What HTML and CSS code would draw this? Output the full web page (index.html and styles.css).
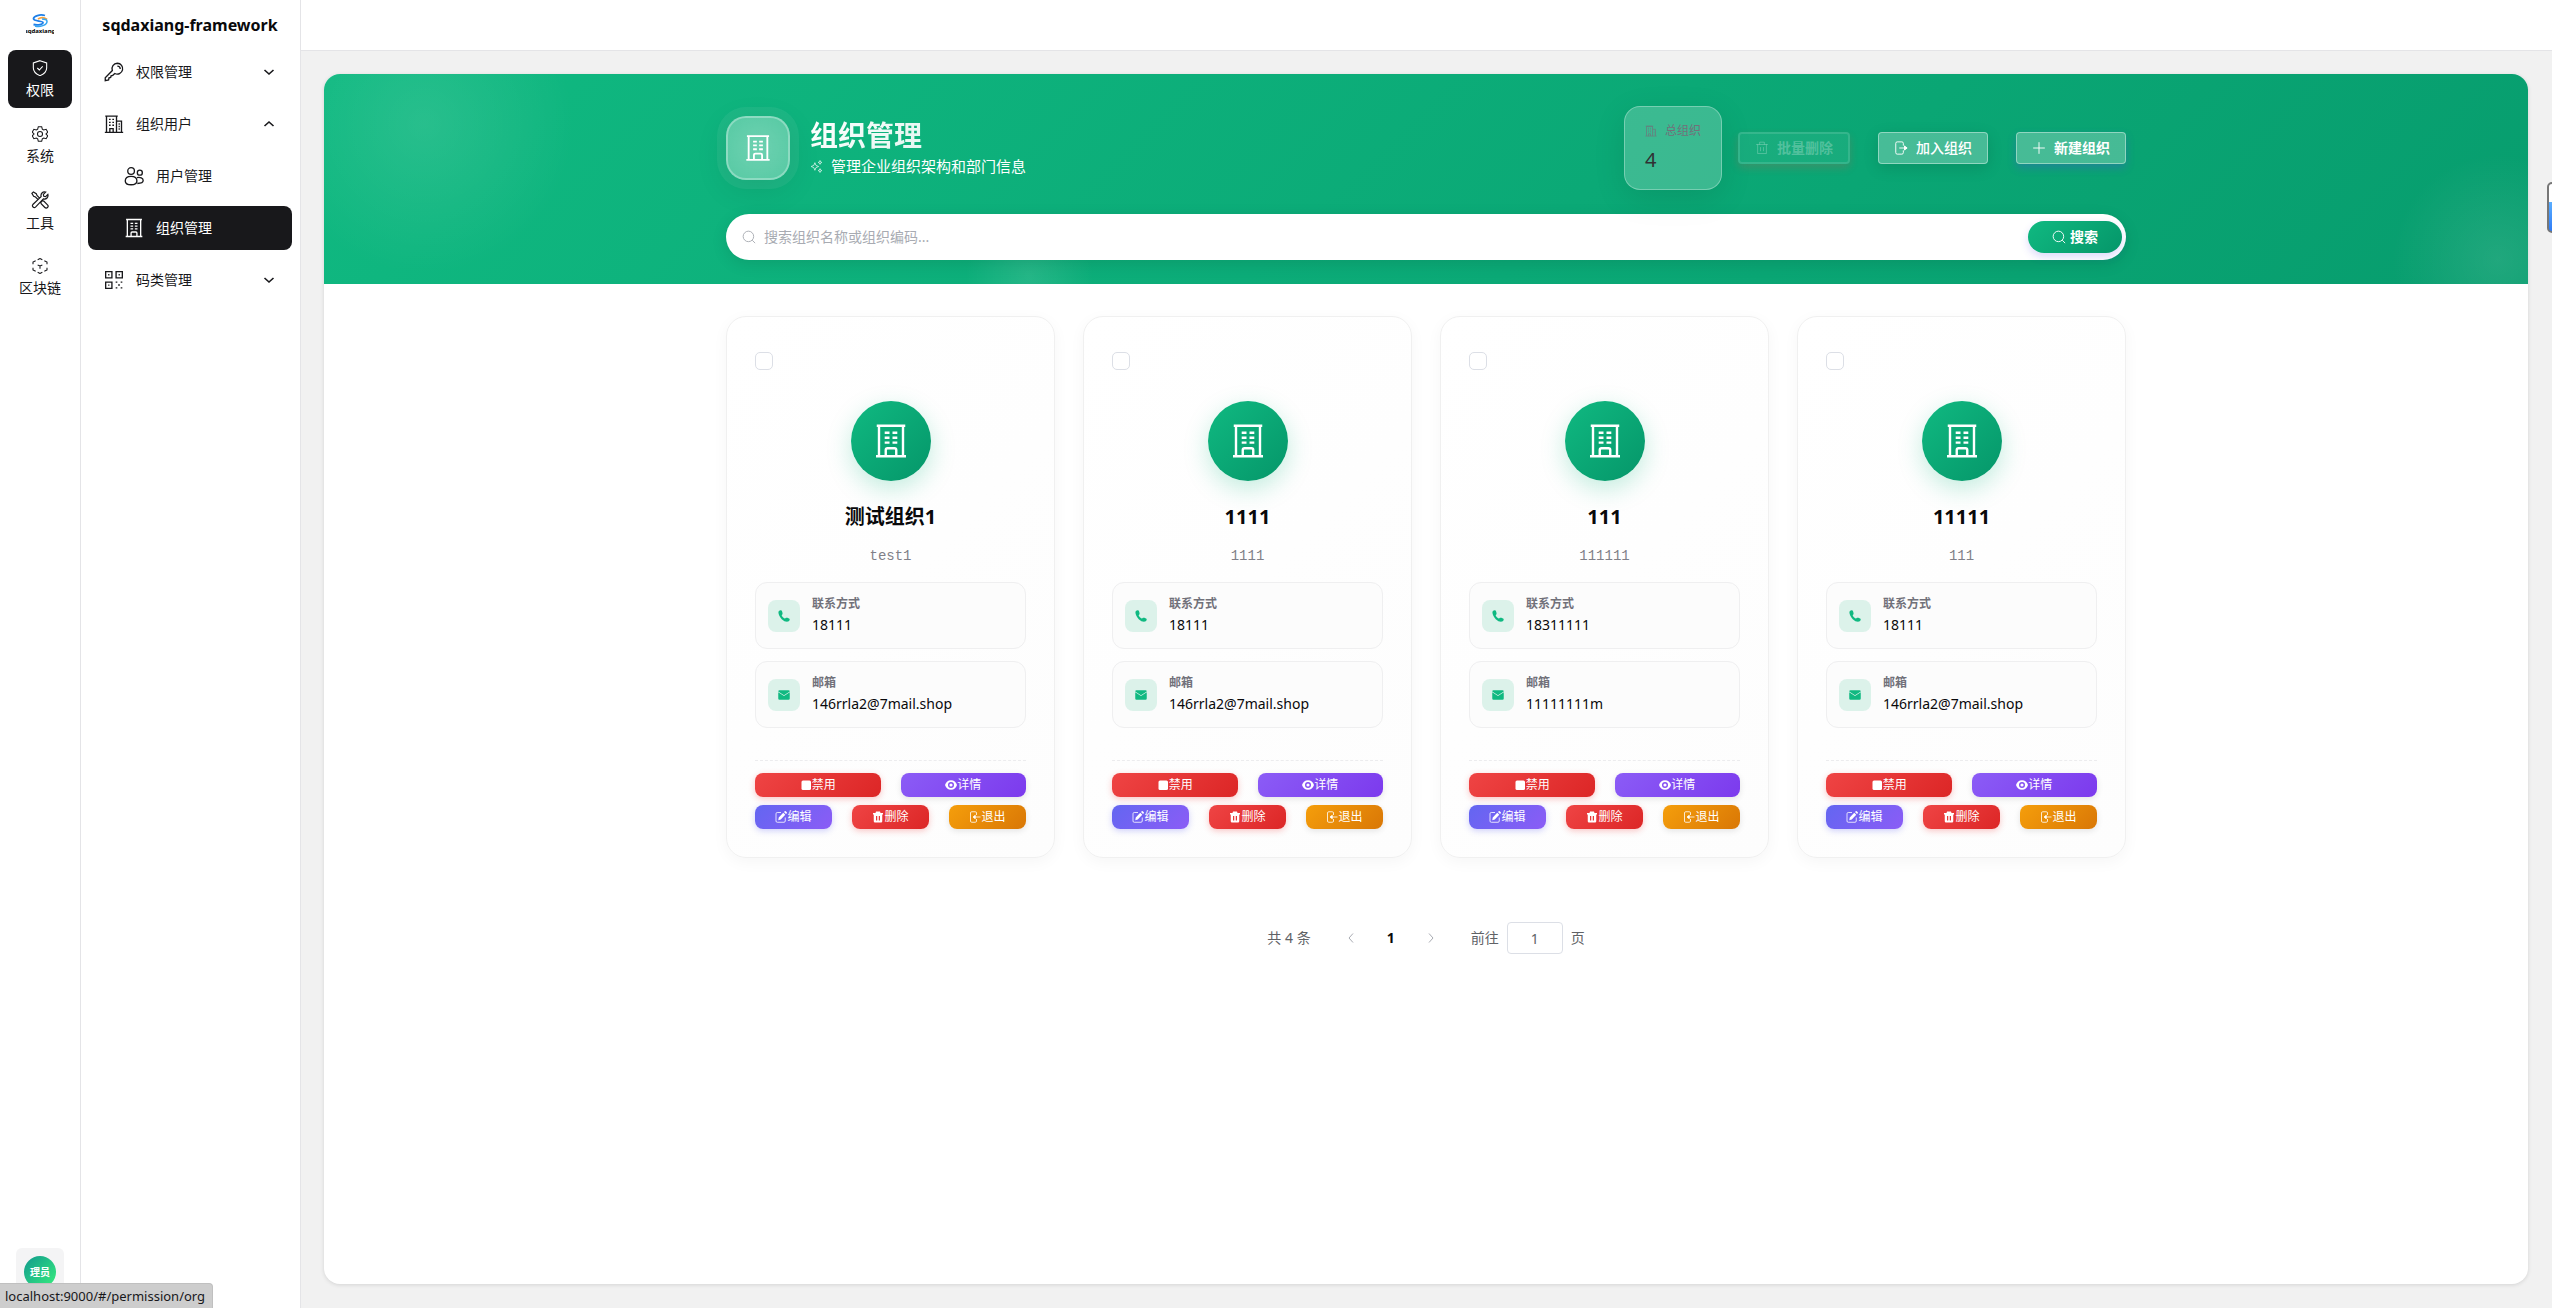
FILE: index.html
```html
<!DOCTYPE html>
<html lang="zh-CN">

<head>
  <meta charset="UTF-8">
  <meta name="viewport" content="width=device-width, initial-scale=1.0">
  <title>组织管理</title>
  <link rel="stylesheet" href="styles.css">
</head>

<body>
  <!-- shared icons -->
  <svg class="icon-defs" width="0" height="0">
    <symbol id="i-building" viewBox="0 0 24 24">
      <path d="M2.500 1.800h19M2 22.200h20M4 1.800v20.400M20 1.800v20.400M8.500 22v-4a1.200 1.200 0 0 1 1.200-1.200h4.600a1.200 1.200 0 0 1 1.200 1.200v4M7.800 6.500h3.200M13 6.500h3.200M7.800 9.800h3.200M13 9.800h3.200M7.800 13.100h3.200M13 13.100h3.200" />
    </symbol>
    <symbol id="i-office" viewBox="0 0 24 24">
      <path d="M1 22h22M3 22V2.500h12V22M15 8.500h6V22M1.500 2.500h15M6 6.500h2M10 6.500h2M6 10h2M10 10h2M6 13.500h2M10 13.500h2M7 22v-4.500h4V22M17.500 12h1.500M17.500 15h1.500M17.500 18h1.500" />
    </symbol>
    <symbol id="i-search" viewBox="0 0 24 24">
      <circle cx="11" cy="11" r="9" />
      <path d="M17.500 17.500l5 5" />
    </symbol>
    <symbol id="i-down" viewBox="0 0 12 12">
      <path d="M1.500 4L6 8l4.500-4" />
    </symbol>
    <symbol id="i-trash" viewBox="0 0 24 24">
      <path d="M2 6h20M8 6V2h8v4M4.500 6v15.500h15V6M9.500 10.500v7M14.500 10.500v7" />
    </symbol>
    <symbol id="i-trash-fill" viewBox="0 0 24 24">
      <path fill="currentColor" stroke="none" fill-rule="evenodd" d="M8 1h8l1 3h5v3h-1.500v13.500a2.500 2.500 0 0 1-2.500 2.500H6a2.500 2.500 0 0 1-2.500-2.500V7H2V4h5zM8 10v9h2.500v-9zM13.500 10v9H16v-9z" />
    </symbol>
    <symbol id="i-join" viewBox="0 0 24 24">
      <path d="M16 8V4a2.500 2.500 0 0 0-2.500-2.500h-8A2.500 2.500 0 0 0 3 4v16a2.500 2.500 0 0 0 2.500 2.500h8A2.500 2.500 0 0 0 16 20v-4M9 12h10" />
      <path fill="currentColor" d="M18 8.500l4.500 3.500-4.500 3.500z" />
    </symbol>
    <symbol id="i-exit" viewBox="0 0 24 24">
      <path d="M15 8V4a2.500 2.500 0 0 0-2.500-2.500h-7A2.500 2.500 0 0 0 3 4v16a2.500 2.500 0 0 0 2.500 2.500h7A2.500 2.500 0 0 0 15 20v-4M11 12h12" />
      <path fill="currentColor" d="M12.500 8.500L8 12l4.500 3.500z" />
    </symbol>
    <symbol id="i-phone" viewBox="0 0 24 24">
      <path fill="currentColor" stroke="none" d="M1.500 2.500C3 .500 5.500 0 7 1c1.500 1.500 2.500 5.500 2 7.500-.500 1-2 1.500-1.500 2.500 1 2.500 3.500 5 6 6 1 .300 1.500-1 2.500-1.500 1.500-.500 5.500.500 7 2 1 1.500 0 4-1.500 5-3 2-9 1-14-4S-.500 5.500 1.500 2.500z" />
    </symbol>
    <symbol id="i-mail" viewBox="0 0 24 24">
      <path fill="currentColor" stroke="none" d="M3 2.500h18a2.500 2.500 0 0 1 2.500 2.500L12 12.500.500 5A2.500 2.500 0 0 1 3 2.500zM.500 6.500L12 14l11.500-7.500V19a2.500 2.500 0 0 1-2.500 2.500H3A2.500 2.500 0 0 1 .500 19z" />
    </symbol>
    <symbol id="i-stop" viewBox="0 0 24 24">
      <rect x="3" y="3" width="19" height="19" rx="3" fill="currentColor" stroke="none" />
    </symbol>
    <symbol id="i-eye" viewBox="0 0 24 24">
      <path fill="currentColor" stroke="none" fill-rule="evenodd" d="M12 2.500c6 0 10 4 12 9.500-2 5.500-6 9.500-12 9.500S2 17.500 0 12C2 6.500 6 2.500 12 2.500zm0 3.500a6 6 0 1 0 0 12 6 6 0 0 0 0-12zm0 2.800a3.200 3.200 0 1 1 0 6.400 3.200 3.200 0 0 1 0-6.400z" />
    </symbol>
    <symbol id="i-edit" viewBox="0 0 24 24">
      <path d="M12 3H4.500A2.500 2.500 0 0 0 2 5.500V20a2.500 2.500 0 0 0 2.500 2.500H18a2.500 2.500 0 0 0 2.500-2.500v-7" />
      <path fill="currentColor" stroke="none" d="M16.500 3.500l4 4L11.500 17l-5 1.500 1-5.500zM18 2l1.500-1.500a1.500 1.500 0 0 1 2 0l2 2a1.500 1.500 0 0 1 0 2L22 6z" />
    </symbol>
  </svg>

  <div class="layout">
    <aside class="rail">
      <a class="logo" href="#/">
        <svg width="28" height="22" viewBox="0 0 28 22">
          <path d="M19 1.500C14 0 7.500 2 7.500 4.800S17 6.500 17 8.500s-5 3-9.500 2" fill="none" stroke="#1e7fe8" stroke-width="1.800" />
          <path d="M12 5c3-2 6-2 9 .500" fill="none" stroke="#f6a23c" stroke-width="1.800" />
          <path d="M9 12c5 1.500 12-1 12-4.500 0-1.500-2-2.500-5-2.500" fill="none" stroke="#35a6f2" stroke-width="1.500" />
          <text x="14" y="19" text-anchor="middle">sqdaxiang</text>
        </svg>
      </a>
      <nav class="rail-nav">
        <a class="rail-item active" href="#/permission">
          <svg class="icon" viewBox="0 0 24 24"><path d="M12 1l10 3.500v7.500c0 5.500-4 9-10 11.500-6-2.500-10-6-10-11.500V4.500zM8 12l3 3 5-5.500" /></svg>
          <span>权限</span>
        </a>
        <a class="rail-item" href="#/system">
          <svg class="icon" viewBox="0 0 24 24"><path d="M9.500 1h5l1 3.700 2 1.200 3.700-1 2.500 4.300-2.700 2.800 2.700 2.800-2.500 4.300-3.700-1-2 1.200-1 3.700h-5l-1-3.700-2-1.200-3.700 1L.300 14.800 3 12 .300 9.200l2.500-4.300 3.700 1 2-1.200z" /><circle cx="12" cy="12" r="3.800" /></svg>
          <span>系统</span>
        </a>
        <a class="rail-item" href="#/tools">
          <svg class="icon large" viewBox="0 0 24 24"><path d="M9.500 11.500L6 8 3.500 7 1.200 3.200l2-2L7 3.500 8 6l3.500 3.500M13 15l2-2 2 .500 5 5a2.400 2.400 0 0 1-3.500 3.500l-5-5zM19.500 1.500l-3 3 .500 2.500 2.500.500 3-3c1 4-2 7-6 6L6 21.500A2.500 2.500 0 0 1 2.500 18L13.500 7.500c-1-4 2-7 6-6z" /></svg>
          <span>工具</span>
        </a>
        <a class="rail-item" href="#/blockchain">
          <svg class="icon" viewBox="0 0 24 24"><path d="M8.500 2.500L12 .800l3.500 1.700M8.500 21.500l3.500 1.700 3.500-1.700M5.500 4L1.500 6v3.500M18.500 4l4 2v3.500M5.500 20l-4-2v-3.500M18.500 20l4-2v-3.500M8.500 10.500L12 12l3.500-1.500M12 12v4" /></svg>
          <span>区块链</span>
        </a>
      </nav>
      <button class="user" type="button"><span class="avatar">理员</span></button>
    </aside>

    <aside class="sidebar">
      <h2 class="app-name">sqdaxiang-framework</h2>
      <nav class="menu">
        <a class="menu-item" href="#/permission">
          <svg class="icon" viewBox="0 0 24 24"><path d="M16 1.500a6.500 6.500 0 1 1-3 12.300L10.500 16l-2 .500-.500 2-2 .500-.500 2.500-4 1v-3.500L10 10.300A6.500 6.500 0 0 1 16 1.500zM16 5a3.500 3.500 0 0 1 3.500 3.500" /></svg>
          <span>权限管理</span>
          <svg class="arrow"><use href="#i-down" /></svg>
        </a>
        <a class="menu-item" href="#/permission/group">
          <svg class="icon"><use href="#i-office" /></svg>
          <span>组织用户</span>
          <svg class="arrow up"><use href="#i-down" /></svg>
        </a>
        <a class="menu-item sub" href="#/permission/user">
          <svg class="icon" viewBox="0 0 24 24"><circle cx="8.500" cy="6" r="4" /><circle cx="19" cy="8" r="3" /><path d="M1.500 18c0-4 3-5.500 7-5.500s7 1.500 7 5.500-3 4.500-7 4.500-7-.500-7-4.500zM15.500 14c4-1 7.500.500 7.500 3.500S20.500 21 16 21" /></svg>
          <span>用户管理</span>
        </a>
        <a class="menu-item sub active" href="#/permission/org">
          <svg class="icon"><use href="#i-building" /></svg>
          <span>组织管理</span>
        </a>
        <a class="menu-item" href="#/code">
          <svg class="icon" viewBox="0 0 24 24"><path d="M2 2h7.500v7.500H2zM14.500 2H22v7.500h-7.500zM2 14.500h7.500V22H2zM5 5.700h1.500M17.500 5.700H19M5 18.200h1.500M14 14.500h2M20 14.500h2M17 18h2M14 21.500h2M20 21.500h2" /></svg>
          <span>码类管理</span>
          <svg class="arrow"><use href="#i-down" /></svg>
        </a>
      </nav>
    </aside>

    <div class="main">
      <header class="topbar"></header>
      <main class="page">
        <section class="hero">
          <div class="wrap">
            <div class="hero-top">
              <div class="hero-icon"><svg class="icon"><use href="#i-building" /></svg></div>
              <div class="hero-text">
                <h1>组织管理</h1>
                <p>
                  <svg class="icon" viewBox="0 0 24 24"><path d="M9 5l2 5 5 2-5 2-2 5-2-5-5-2 5-2zM18.500 1l1 2.500L22 4.500l-2.500 1-1 2.500-1-2.500-2.500-1 2.500-1zM18.500 16l1 2.500 2.500 1-2.500 1-1 2.500-1-2.500-2.500-1 2.500-1z" /></svg>
                  管理企业组织架构和部门信息
                </p>
              </div>
              <div class="stat">
                <div class="stat-label"><svg class="icon"><use href="#i-office" /></svg>总组织</div>
                <div class="stat-value">4</div>
              </div>
              <div class="hero-actions">
                <button class="hero-btn danger" type="button" disabled><svg class="icon"><use href="#i-trash" /></svg>批量删除</button>
                <button class="hero-btn" type="button"><svg class="icon"><use href="#i-join" /></svg>加入组织</button>
                <button class="hero-btn primary" type="button"><svg class="icon" viewBox="0 0 24 24"><path d="M12 2v20M2 12h20" /></svg>新建组织</button>
              </div>
            </div>
            <form class="search">
              <svg class="icon"><use href="#i-search" /></svg>
              <input type="text" placeholder="搜索组织名称或组织编码..." aria-label="搜索组织">
              <button type="button"><svg class="icon"><use href="#i-search" /></svg>搜索</button>
            </form>
          </div>
        </section>

        <section class="wrap cards" id="cards"></section>

        <div class="pagination">
          <span>共 4 条</span>
          <button class="prev" type="button" aria-label="上一页" disabled><svg class="arrow"><use href="#i-down" /></svg></button>
          <button class="current" type="button">1</button>
          <button class="next" type="button" aria-label="下一页" disabled><svg class="arrow"><use href="#i-down" /></svg></button>
          <label for="page">前往</label>
          <input id="page" type="text" value="1">
          <span>页</span>
        </div>
      </main>
    </div>
  </div>

  <div class="edge-handle"></div>
  <div class="status-bar">localhost:9000/#/permission/org</div>

  <script src="script.js"></script>
</body>

</html>
```

FILE: styles.css
```css
* {
  box-sizing: border-box;
}

body,
html {
  margin: 0;
  padding: 0;
  height: 100%;
}

body {
  font-family: "Noto Sans", "Noto Sans CJK SC", sans-serif;
  font-size: 14px;
  line-height: 20px;
  color: #18181b;
  background-color: #fff;
}

a {
  color: inherit;
  text-decoration: none;
}

button,
input {
  font: inherit;
  color: inherit;
  border: none;
  background: none;
  padding: 0;
}

h1,
h2,
h3,
p {
  margin: 0;
}

.icon-defs {
  position: absolute;
}

.icon,
.arrow {
  flex: none;
  width: 20px;
  height: 20px;
  fill: none;
  stroke: currentColor;
  stroke-width: 1.6;
}

.arrow {
  width: 12px;
  height: 12px;
}

.layout {
  display: flex;
  height: 100%;
}

/* left icon rail */
.rail {
  flex: none;
  width: 81px;
  padding: 0 8px 12px;
  border-right: 1px solid #e4e4e7;
  display: flex;
  flex-direction: column;
  align-items: center;
}

.logo {
  height: 50px;
  display: flex;
  align-items: center;
}

.logo text {
  font-size: 6px;
  font-weight: 700;
}

.rail-nav {
  width: 100%;
  display: flex;
  flex-direction: column;
  gap: 8px;
}

.rail-item {
  height: 58px;
  padding-top: 2px;
  border-radius: 8px;
  display: flex;
  flex-direction: column;
  align-items: center;
  justify-content: center;
  gap: 4px;
}

.rail-item .icon {
  width: 16px;
  height: 16px;
}

.rail-item .icon.large {
  width: 18px;
  height: 18px;
}

.rail-item.active,
.menu-item.active {
  background-color: #18181b;
  color: #fff;
}

.user {
  margin-top: auto;
  width: 48px;
  height: 48px;
  border-radius: 6px;
  background-color: #f4f4f5;
  display: flex;
  align-items: center;
  justify-content: center;
}

.avatar {
  width: 32px;
  height: 32px;
  border-radius: 50%;
  background: linear-gradient(135deg, #11998e, #38ef7d);
  color: #fff;
  font-size: 10px;
  font-weight: 700;
  line-height: 32px;
}

/* menu */
.sidebar {
  flex: none;
  width: 220px;
  padding: 0 8px 0 7px;
  border-right: 1px solid #e4e4e7;
}

.app-name {
  height: 50px;
  line-height: 50px;
  font-size: 16px;
  font-weight: 700;
  text-align: center;
  color: #09090b;
}

.menu {
  display: flex;
  flex-direction: column;
  gap: 8px;
}

.menu-item {
  height: 44px;
  padding: 0 17px 0 16px;
  border-radius: 8px;
  display: flex;
  align-items: center;
  gap: 12px;
}

.menu-item.sub {
  padding-left: 36px;
}

.menu-item .arrow {
  margin-left: auto;
}

.arrow.up {
  transform: rotate(180deg);
}

/* main area */
.main {
  flex: 1;
  min-width: 0;
  background-color: #f1f1f1;
  display: flex;
  flex-direction: column;
}

.topbar {
  height: 51px;
  background-color: #fff;
  border-bottom: 1px solid #e4e4e7;
}

.page {
  flex: 1;
  margin: 23px 24px 24px 23px;
  border-radius: 16px;
  background-color: #fff;
  box-shadow: 0 1px 4px rgba(0, 0, 0, 0.12);
  overflow: hidden;
}

.wrap {
  max-width: 1400px;
  margin: 0 auto;
}

.hero {
  padding: 32px 24px 24px;
  color: #fff;
  background:
    radial-gradient(circle at 100px 50px, rgba(255, 255, 255, 0.1), transparent 150px),
    radial-gradient(circle at calc(100% - 30px) calc(100% - 24px), rgba(255, 255, 255, 0.1), transparent 106px),
    radial-gradient(circle at 32% 96%, rgba(255, 255, 255, 0.1), transparent 64px),
    linear-gradient(135deg, #10b981, #059669 125%);
}

.hero-top {
  display: flex;
  align-items: center;
  height: 84px;
  margin-bottom: 24px;
}

.hero-icon {
  width: 64px;
  height: 64px;
  border: 2px solid rgba(255, 255, 255, 0.3);
  border-radius: 20px;
  background: radial-gradient(circle, rgba(255, 255, 255, 0.4), rgba(255, 255, 255, 0.3));
  box-shadow: 0 0 0 9px rgba(255, 255, 255, 0.06), 0 8px 32px rgba(0, 0, 0, 0.1);
  display: flex;
  align-items: center;
  justify-content: center;
}

.hero-icon .icon {
  width: 28px;
  height: 28px;
}

.hero-text {
  margin-left: 20px;
  margin-right: auto;
}

.hero-text h1 {
  font-size: 28px;
  line-height: 36px;
  font-weight: 700;
  background: linear-gradient(135deg, #fff, rgba(255, 255, 255, 0.8));
  background-clip: text;
  -webkit-background-clip: text;
  color: transparent;
}

.hero-text p {
  display: flex;
  align-items: center;
  gap: 8px;
  font-size: 15px;
  line-height: 26px;
}

.hero-text p .icon {
  width: 13px;
  height: 13px;
  opacity: 0.8;
}

.stat {
  width: 98px;
  height: 84px;
  padding: 14px 20px;
  border: 1px solid rgba(255, 255, 255, 0.3);
  border-radius: 16px;
  background-color: rgba(255, 255, 255, 0.2);
  box-shadow: 0 8px 32px rgba(0, 0, 0, 0.1);
}

.stat-label {
  display: flex;
  align-items: center;
  gap: 8px;
  font-size: 12px;
  line-height: 20px;
  color: #71717a;
  white-space: nowrap;
}

.stat-label .icon {
  width: 12px;
  height: 12px;
  opacity: 0.8;
}

.stat-value {
  margin-top: 4px;
  font-size: 20px;
  line-height: 30px;
  color: #303133;
}

.hero-actions {
  display: flex;
  gap: 28px;
  margin-left: 16px;
}

.hero-btn {
  height: 32px;
  padding: 0 15px;
  border: 1px solid rgba(255, 255, 255, 0.4);
  border-radius: 4px;
  background-color: rgba(255, 255, 255, 0.25);
  box-shadow: 0 4px 16px rgba(0, 0, 0, 0.12);
  display: flex;
  align-items: center;
  gap: 8px;
  font-weight: 500;
}

.hero-btn .icon,
.search .icon {
  width: 14px;
  height: 14px;
}

.hero-btn.primary {
  font-weight: 700;
  box-shadow: 0 4px 8px rgba(79, 70, 229, 0.3);
}

.hero-btn.danger {
  border-width: 2px;
  border-color: rgba(255, 255, 255, 0.12);
  background-color: rgba(255, 255, 255, 0.06);
  box-shadow: 0 4px 8px rgba(239, 68, 68, 0.2);
  color: rgba(255, 255, 255, 0.26);
  font-weight: 700;
}

.search {
  height: 46px;
  padding: 0 4px 0 16px;
  border-radius: 23px;
  background-color: #fff;
  box-shadow: 0 4px 16px rgba(0, 0, 0, 0.1);
  display: flex;
  align-items: center;
  gap: 8px;
  color: #a8abb2;
}

.search input {
  flex: 1;
  min-width: 0;
  outline: none;
  color: #303133;
}

.search input::placeholder {
  color: #a8abb2;
}

.search button {
  width: 94px;
  height: 32px;
  border-radius: 16px;
  background: linear-gradient(135deg, #10b981, #059669);
  box-shadow: 0 4px 8px rgba(79, 70, 229, 0.2);
  color: #fff;
  font-weight: 700;
  display: flex;
  align-items: center;
  justify-content: center;
  gap: 4px;
}

/* cards */
.cards {
  margin-top: 32px;
  display: grid;
  grid-template-columns: repeat(4, 1fr);
  gap: 28px;
}

.card {
  padding: 35px 28px 28px;
  border: 1px solid #f0f0f0;
  border-radius: 20px;
  background: linear-gradient(135deg, #fff, #fdfdfd);
  box-shadow: 0 4px 16px rgba(0, 0, 0, 0.04);
  display: flex;
  flex-direction: column;
}

.card-check {
  appearance: none;
  width: 18px;
  height: 18px;
  margin: 0 0 31px;
  border: 1px solid #dcdfe6;
  border-radius: 5px;
  background-color: #fff;
}

.card-avatar {
  align-self: center;
  width: 80px;
  height: 80px;
  border-radius: 50%;
  background: linear-gradient(135deg, #10b981, #059669);
  box-shadow: 0 8px 24px rgba(16, 185, 129, 0.25);
  color: #fff;
  display: flex;
  align-items: center;
  justify-content: center;
}

.card-avatar .icon {
  width: 36px;
  height: 36px;
}

.card h3 {
  margin-top: 21px;
  font-size: 20px;
  line-height: 30px;
  font-weight: 700;
  text-align: center;
  color: #09090b;
}

.card-code {
  margin: 14px 0 16px;
  font-family: "Liberation Mono", monospace;
  font-size: 14px;
  line-height: 20px;
  text-align: center;
  color: #808088;
}

.info {
  height: 67px;
  margin-bottom: 12px;
  padding: 0 12px;
  border: 1px solid #efeff0;
  border-radius: 12px;
  background-color: #fcfcfc;
  display: flex;
  align-items: center;
  gap: 12px;
}

.info-icon {
  width: 32px;
  height: 32px;
  border-radius: 8px;
  background-color: #dcf2ea;
  color: #10b981;
  display: flex;
  align-items: center;
  justify-content: center;
}

.info-icon .icon {
  width: 12px;
  height: 12px;
}

.info dl,
.info dd {
  margin: 0;
}

.info dl {
  padding-bottom: 2px;
}

.info dt {
  font-size: 12px;
  line-height: 20px;
  font-weight: 600;
  color: #71717a;
}

.info dd {
  font-size: 14px;
  line-height: 22px;
  color: #09090b;
}

.card-actions {
  margin-top: 20px;
  padding-top: 12px;
  border-top: 1px dashed #ececee;
  display: grid;
  grid-template-columns: repeat(6, 1fr);
  gap: 8px 20px;
}

.card-actions button {
  grid-column: span 2;
  height: 24px;
  border-radius: 8px;
  color: #fff;
  font-size: 12px;
  display: flex;
  align-items: center;
  justify-content: center;
}

.card-actions .wide {
  grid-column: span 3;
}

.card-actions .icon {
  width: 12px;
  height: 12px;
}

.red {
  background: linear-gradient(135deg, #ef4444, #dc2626);
  box-shadow: 0 2px 6px rgba(239, 68, 68, 0.3);
}

.violet {
  background: linear-gradient(135deg, #8b5cf6, #7c3aed);
  box-shadow: 0 2px 6px rgba(0, 0, 0, 0.1);
}

.indigo {
  background: linear-gradient(135deg, #6366f1, #8b5cf6);
  box-shadow: 0 2px 6px rgba(99, 102, 241, 0.3);
}

.amber {
  background: linear-gradient(135deg, #f59e0b, #d97706);
  box-shadow: 0 2px 6px rgba(0, 0, 0, 0.1);
}

/* pagination */
.pagination {
  margin-top: 64px;
  height: 32px;
  display: flex;
  align-items: center;
  justify-content: center;
  color: #606266;
}

.pagination button {
  width: 32px;
  height: 32px;
  margin-left: 8px;
  display: flex;
  align-items: center;
  justify-content: center;
}

.pagination .arrow {
  stroke: #a8abb2;
  stroke-width: 1;
}

.pagination .prev {
  margin-left: 24px;
}

.prev .arrow {
  transform: rotate(90deg);
}

.next .arrow {
  transform: rotate(-90deg);
}

.pagination .current {
  font-weight: 700;
  color: #09090b;
}

.pagination label {
  margin-left: 24px;
}

.pagination input {
  width: 56px;
  height: 32px;
  margin: 0 8px;
  border: 1px solid #dcdfe6;
  border-radius: 4px;
  text-align: center;
}

/* overlays */
.edge-handle {
  position: fixed;
  right: -20px;
  top: 182px;
  width: 25px;
  height: 51px;
  border: 2px solid #777;
  border-radius: 5px;
  background: linear-gradient(#fff 18px, #5aaeff 18px, #2f7cf6);
}

.status-bar {
  position: fixed;
  left: 0;
  bottom: 0;
  height: 25px;
  padding: 0 7px 0 5px;
  border: 1px solid #c0c0c0;
  border-left: none;
  border-bottom: none;
  border-radius: 0 4px 0 0;
  background-color: #cdcdcd;
  font-size: 13px;
  line-height: 24px;
}
```

FILE: script.js
```javascript
const orgs = [
  { name: '测试组织1', code: 'test1', phone: '18111', mail: '146rrla2@7mail.shop' },
  { name: '1111', code: '1111', phone: '18111', mail: '146rrla2@7mail.shop' },
  { name: '111', code: '111111', phone: '18311111', mail: '11111111m' },
  { name: '11111', code: '111', phone: '18111', mail: '146rrla2@7mail.shop' }
];

const icon = (id) => `<svg class="icon"><use href="#i-${id}" /></svg>`;

document.getElementById('cards').innerHTML = orgs.map((org) => `
  <article class="card">
    <input class="card-check" type="checkbox" aria-label="选择 ${org.name}">
    <div class="card-avatar">${icon('building')}</div>
    <h3>${org.name}</h3>
    <p class="card-code">${org.code}</p>
    <div class="info">
      <div class="info-icon">${icon('phone')}</div>
      <dl><dt>联系方式</dt><dd>${org.phone}</dd></dl>
    </div>
    <div class="info">
      <div class="info-icon">${icon('mail')}</div>
      <dl><dt>邮箱</dt><dd>${org.mail}</dd></dl>
    </div>
    <div class="card-actions">
      <button class="red wide" type="button">${icon('stop')}禁用</button>
      <button class="violet wide" type="button">${icon('eye')}详情</button>
      <button class="indigo" type="button">${icon('edit')}编辑</button>
      <button class="red" type="button">${icon('trash-fill')}删除</button>
      <button class="amber" type="button">${icon('exit')}退出</button>
    </div>
  </article>
`).join('');
```
